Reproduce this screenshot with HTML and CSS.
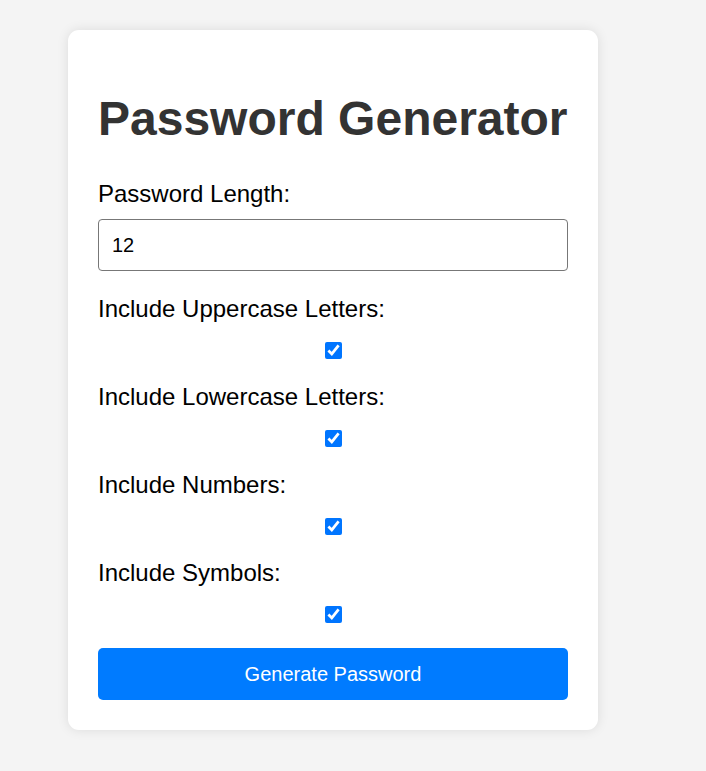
FILE: index.html
```html
<!DOCTYPE html>
<html lang="en">
<head>
<meta charset="utf-8">
<title>Password Generator</title>
<link rel="stylesheet" href="styles.css">
</head>
<body>
<div class="card">
  <h1 class="title">Password Generator</h1>
  <div class="group">
    <label class="label" for="length">Password Length:</label>
    <input class="text-input" type="number" id="length" value="12">
  </div>
  <div class="group">
    <label class="label" for="upper">Include Uppercase Letters:</label>
    <input class="check" type="checkbox" id="upper" checked>
  </div>
  <div class="group">
    <label class="label" for="lower">Include Lowercase Letters:</label>
    <input class="check" type="checkbox" id="lower" checked>
  </div>
  <div class="group">
    <label class="label" for="numbers">Include Numbers:</label>
    <input class="check" type="checkbox" id="numbers" checked>
  </div>
  <div class="group group-last">
    <label class="label" for="symbols">Include Symbols:</label>
    <input class="check" type="checkbox" id="symbols" checked>
  </div>
  <button class="btn" type="button">Generate Password</button>
</div>
</body>
</html>
```
FILE: styles.css
```css
html, body {
  margin: 0;
  padding: 0;
}
body {
  background: #f4f4f4;
  font-family: "Liberation Sans", Arial, sans-serif;
  padding: 30px 0 0 68px;
  min-height: 771px;
  box-sizing: border-box;
}
.card {
  width: 530px;
  box-sizing: border-box;
  background: #fff;
  border-radius: 11px;
  padding: 30px;
  box-shadow: 0 0 12px rgba(0, 0, 0, 0.1);
}
.title {
  font-size: 48px;
  font-weight: bold;
  color: #333;
  margin: 32px 0 34px;
  line-height: 54px;
}
.group {
  margin-bottom: 24px;
}
.group-last {
  margin-bottom: 25px;
}
.label {
  display: block;
  font-size: 24px;
  line-height: 28px;
  color: #000;
  margin-bottom: 11px;
}
.text-input {
  display: block;
  width: 100%;
  box-sizing: border-box;
  height: 52px;
  padding: 0 13px;
  font-family: "Liberation Sans", Arial, sans-serif;
  font-size: 20px;
  color: #000;
  border: 1px solid #777;
  border-radius: 4px;
  background: #fff;
  margin: 0;
  -moz-appearance: textfield;
}
.text-input::-webkit-outer-spin-button,
.text-input::-webkit-inner-spin-button {
  -webkit-appearance: none;
  margin: 0;
}
.check {
  display: block;
  width: 17px;
  height: 17px;
  margin: 19px auto 0;
  accent-color: #0075ff;
}
.btn {
  display: block;
  width: 100%;
  height: 52px;
  border: none;
  border-radius: 5px;
  background: #007bff;
  color: #fff;
  font-family: "Liberation Sans", Arial, sans-serif;
  font-size: 20px;
  cursor: pointer;
}
```
